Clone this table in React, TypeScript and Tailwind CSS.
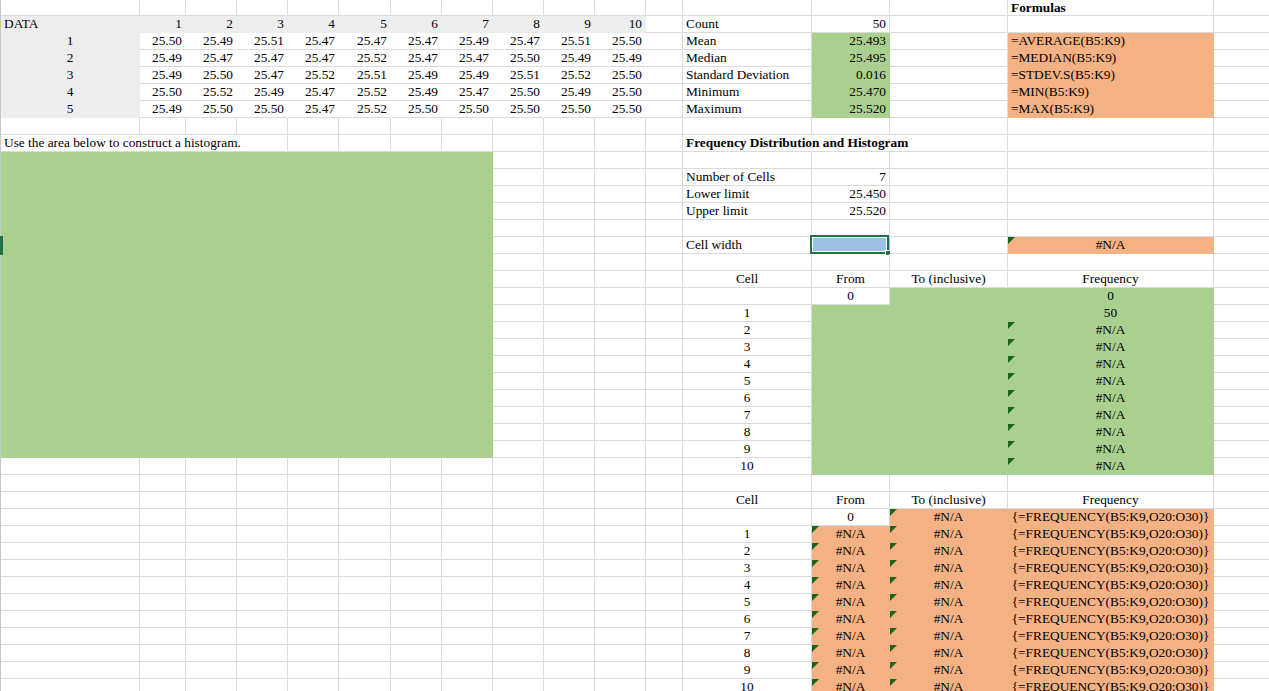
import React from "react";

type Cell = {
  t?: string;
  a?: "l" | "r" | "c";
  bg?: "grey" | "green" | "orange" | "white" | "blue";
  b?: boolean;
  tri?: boolean;
  span?: number;
  skip?: boolean;
  noR?: boolean;
  sel?: boolean;
};

const NCOLS = 17;
const NROWS = 41;

const data = [
  ["25.50", "25.49", "25.51", "25.47", "25.47", "25.47", "25.49", "25.47", "25.51", "25.50"],
  ["25.49", "25.47", "25.47", "25.47", "25.52", "25.47", "25.47", "25.50", "25.49", "25.49"],
  ["25.49", "25.50", "25.47", "25.52", "25.51", "25.49", "25.49", "25.51", "25.52", "25.50"],
  ["25.50", "25.52", "25.49", "25.47", "25.52", "25.49", "25.47", "25.50", "25.49", "25.50"],
  ["25.49", "25.50", "25.50", "25.47", "25.52", "25.50", "25.50", "25.50", "25.50", "25.50"],
];

const stats = [
  ["Mean", "25.493", "=AVERAGE(B5:K9)"],
  ["Median", "25.495", "=MEDIAN(B5:K9)"],
  ["Standard Deviation", "0.016", "=STDEV.S(B5:K9)"],
  ["Minimum", "25.470", "=MIN(B5:K9)"],
  ["Maximum", "25.520", "=MAX(B5:K9)"],
];

const FORMULA = "{=FREQUENCY(B5:K9,O20:O30)}";

const A = 0, B = 1, K = 10, M = 12, N = 13, O = 14, P = 15;

function buildGrid(): Cell[][] {
  const g: Cell[][] = [];
  for (let r = 0; r < NROWS; r++) {
    const row: Cell[] = [];
    for (let c = 0; c < NCOLS; c++) row.push({});
    g.push(row);
  }
  const set = (r: number, c: number, cell: Cell) => {
    g[r][c] = { ...g[r][c], ...cell };
    if (cell.span) for (let k = 1; k < cell.span; k++) g[r][c + k] = { skip: true };
  };

  set(0, P, { t: "Formulas", b: true, a: "l" });

  set(1, A, { t: "DATA", a: "l", bg: "grey" });
  for (let c = B; c <= K; c++) set(1, c, { t: String(c), a: "r", bg: "grey" });
  for (let i = 0; i < 5; i++) {
    const r = 2 + i;
    set(r, A, { t: String(i + 1), a: "c", bg: "grey" });
    for (let c = B; c <= K; c++) set(r, c, { t: data[i][c - 1], a: "r", bg: "white", noR: c !== K });
  }

  set(1, M, { t: "Count", a: "l" });
  set(1, N, { t: "50", a: "r" });
  stats.forEach((s, i) => {
    const r = 2 + i;
    set(r, M, { t: s[0], a: "l" });
    set(r, N, { t: s[1], a: "r", bg: "green" });
    set(r, P, { t: s[2], a: "l", bg: "orange" });
  });

  set(8, A, { t: "Use the area below to construct a histogram.", a: "l", span: 4 });
  set(8, M, { t: "Frequency Distribution and Histogram", a: "l", b: true, span: 3 });

  for (let r = 9; r <= 26; r++) {
    for (let c = A; c <= 7; c++) {
      if (!g[r][c].skip) g[r][c] = { ...g[r][c], bg: "green" };
    }
  }

  set(10, M, { t: "Number of Cells", a: "l" });
  set(10, N, { t: "7", a: "r" });
  set(11, M, { t: "Lower limit", a: "l" });
  set(11, N, { t: "25.450", a: "r" });
  set(12, M, { t: "Upper limit", a: "l" });
  set(12, N, { t: "25.520", a: "r" });

  set(14, M, { t: "Cell width", a: "l" });
  set(14, N, { bg: "blue", sel: true });
  set(14, P, { t: "#N/A", a: "c", bg: "orange", tri: true });

  const header = (r: number) => {
    set(r, M, { t: "Cell", a: "c" });
    set(r, N, { t: "From", a: "c" });
    set(r, O, { t: "To (inclusive)", a: "c" });
    set(r, P, { t: "Frequency", a: "c" });
  };

  header(16);
  set(17, N, { t: "0", a: "c" });
  set(17, O, { bg: "green" });
  set(17, P, { t: "0", a: "c", bg: "green" });
  for (let k = 1; k <= 10; k++) {
    const r = 17 + k;
    set(r, M, { t: String(k), a: "c" });
    set(r, N, { bg: "green" });
    set(r, O, { bg: "green" });
    if (k === 1) set(r, P, { t: "50", a: "c", bg: "green" });
    else set(r, P, { t: "#N/A", a: "c", bg: "green", tri: true });
  }

  header(29);
  set(30, N, { t: "0", a: "c" });
  set(30, O, { t: "#N/A", a: "c", bg: "orange", tri: true });
  set(30, P, { t: FORMULA, a: "c", bg: "orange" });
  for (let k = 1; k <= 10; k++) {
    const r = 30 + k;
    set(r, M, { t: String(k), a: "c" });
    set(r, N, { t: "#N/A", a: "c", bg: "orange", tri: true });
    set(r, O, { t: "#N/A", a: "c", bg: "orange", tri: true });
    set(r, P, { t: FORMULA, a: "c", bg: "orange" });
  }
  return g;
}

const bgClass: Record<string, string> = {
  grey: "bg-[#ededed] border-[#ededed]",
  green: "bg-[#a9d08e] border-[#a9d08e]",
  orange: "bg-[#f4b183] border-[#f4b183]",
  white: "bg-white border-b-[#dadada] border-r-white",
  blue: "bg-[#9bc2e6] border-[#9bc2e6]",
};

const spanClass: Record<number, string> = {
  2: "col-span-2",
  3: "col-span-3",
  4: "col-span-4",
};

const alignClass: Record<string, string> = {
  l: "justify-start pl-[3px]",
  r: "justify-end pr-[3px]",
  c: "justify-center",
};

function CellView({ cell }: { cell: Cell }) {
  const base = "relative flex items-center whitespace-nowrap border-r border-b overflow-visible";
  const color = cell.bg ? bgClass[cell.bg] : "border-[#dadada]";
  const noR = cell.noR ? "border-r-white" : "";
  const span = cell.span ? spanClass[cell.span] : "";
  const align = alignClass[cell.a ?? "l"];
  return (
    <div className={`${base} ${color} ${noR} ${span} ${align}`}>
      {cell.tri && (
        <div className="absolute left-0 top-0 h-0 w-0 border-t-[7px] border-r-[7px] border-t-[#1b651b] border-r-transparent" />
      )}
      {cell.t && <span className={cell.b ? "font-bold" : ""}>{cell.t}</span>}
      {cell.sel && (
        <div className="absolute left-[-2px] top-[-2px] right-0 bottom-[-1px] border-2 border-[#217346]">
          <div className="absolute inset-0 border border-white" />
          <div className="absolute right-[-4px] bottom-[-4px] h-[6px] w-[6px] bg-[#217346] border border-white" />
        </div>
      )}
    </div>
  );
}

export default function App() {
  const grid = buildGrid();
  return (
    <div className="relative w-[1269px] h-[691px] overflow-hidden bg-white text-black font-['Liberation_Serif','Times_New_Roman',serif] text-[13.33px] leading-[16px]">
      <div className="grid w-[1350px] border-l border-[#c6c6c6] grid-cols-[139px_46px_51px_51px_51px_52px_51px_51px_51px_51px_51px_37px_129px_78px_118px_206px_137px] grid-rows-[16px_repeat(40,17px)]">
        {grid.flatMap((row, r) =>
          row.map((cell, c) => (cell.skip ? null : <CellView key={`${r}-${c}`} cell={cell} />))
        )}
      </div>
      <div className="absolute left-0 top-[236px] h-[19px] w-[3px] bg-[#217346]" />
    </div>
  );
}
